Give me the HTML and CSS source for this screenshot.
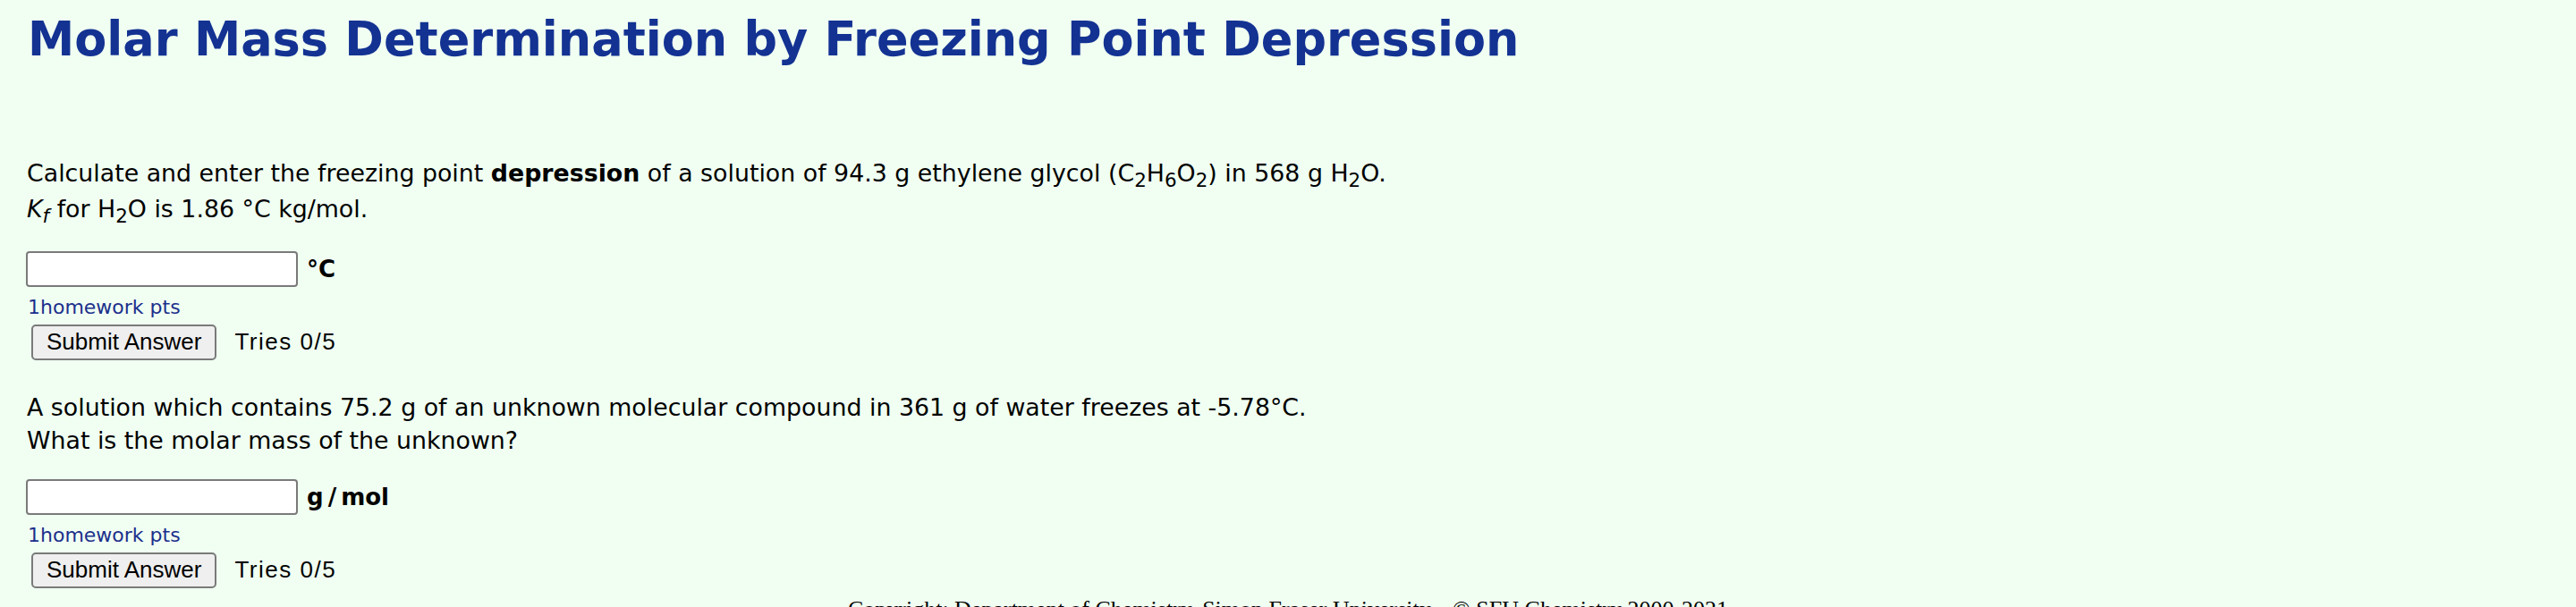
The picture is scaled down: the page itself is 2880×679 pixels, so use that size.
FILE: index.html
```html
<!DOCTYPE html>
<html lang="en">
<head>
  <meta charset="UTF-8">
  <title>Molar Mass Determination by Freezing Point Depression</title>
  <link rel="stylesheet" href="styles.css">
</head>
<body>
  <h1 class="title">Molar Mass Determination by Freezing Point Depression</h1>

  <form class="question">
      <p class="prompt">
          Calculate and enter the freezing point <b>depression</b> of a solution of 94.3 g ethylene glycol (C<sub>2</sub>H<sub>6</sub>O<sub>2</sub>) in 568 g H<sub>2</sub>O.<br>
          <i>K<sub>f</sub></i> for H<sub>2</sub>O is 1.86 &deg;C kg/mol.
      </p>
      <div class="answer-row">
          <input type="text" class="answer" name="q1">
          <span class="unit">&deg;C</span>
      </div>
      <div class="points">1homework pts</div>
      <div class="submit-row">
          <button type="button">Submit Answer</button>
          <span class="tries">Tries 0/5</span>
      </div>
  </form>

  <form class="question">
      <p class="prompt">
          A solution which contains 75.2 g of an unknown molecular compound in 361 g of water freezes at -5.78&deg;C.<br>
          What is the molar mass of the unknown?
      </p>
      <div class="answer-row">
          <input type="text" class="answer" name="q2">
          <span class="unit">g<span class="slash">/</span>mol</span>
      </div>
      <div class="points">1homework pts</div>
      <div class="submit-row">
          <button type="button">Submit Answer</button>
          <span class="tries">Tries 0/5</span>
      </div>
  </form>

  <footer class="copyright">
      Copyright: Department of Chemistry, Simon Fraser University.&nbsp;&nbsp; &copy; SFU Chemistry 2000-2021
  </footer>
</body>
</html>
```

FILE: styles.css
```css
body {
    margin: 0;
    padding: 12px 29px 0;
    background-color: #f0fff2;
    color: black;
    font-family: 'DejaVu Sans', Verdana, sans-serif;
}

.title {
    margin: 0 0 99px 2px;
    font-size: 52.5px;
    line-height: 64px;
    color: #133292;
}

.question {
    margin: 0;
}

.question + .question {
    margin-top: 34px;
}

.prompt {
    margin: 0 0 25px 1px;
    font-size: 26.8px;
    line-height: 37px;
}

.prompt sub {
    font-size: 80%;
    line-height: 27px;
}

.answer-row {
    display: flex;
    align-items: center;
    gap: 10px;
}

.answer {
    box-sizing: border-box;
    width: 304px;
    height: 40px;
    margin: 0;
    border: 2px solid #7a7a7a;
    border-radius: 4px;
    background: white;
}

.unit {
    font-size: 26px;
    font-weight: bold;
}

.slash {
    margin: 0 5px;
}

.points {
    margin: 10px 0 0 2px;
    font-size: 22px;
    color: #1c2f8c;
}

.submit-row {
    display: flex;
    align-items: center;
    gap: 20px;
    margin: 7px 0 0 6px;
    font-family: 'Liberation Sans', Arial, sans-serif;
}

.submit-row button {
    height: 40px;
    padding: 0 15px;
    border: 2px solid #7a7a7a;
    border-radius: 5px;
    background-color: #efefef;
    color: black;
    font-family: inherit;
    font-size: 26px;
}

.tries {
    font-size: 26px;
    letter-spacing: 1.5px;
}

.copyright {
    margin-top: 9px;
    text-align: center;
    font-family: 'Liberation Serif', 'Times New Roman', serif;
    font-size: 26px;
}
```
